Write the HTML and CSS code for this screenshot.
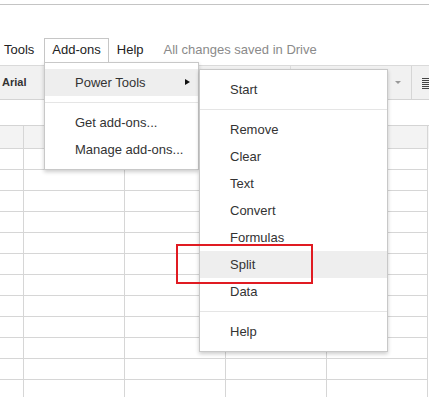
FILE: index.html
```html
<!DOCTYPE html>
<html lang="en">
<head>
    <meta charset="UTF-8">
    <title>Add-ons menu</title>
    <link rel="stylesheet" href="styles.css">
</head>
<body>

    <div class="topbar"></div>

    <div class="menubar">
        <span class="menu-item">Tools</span>
        <span class="menu-item active">Add-ons</span>
        <span class="menu-item">Help</span>
        <span class="save-status">All changes saved in Drive</span>
    </div>

    <div class="toolbar">
        <div class="tb-font">Arial</div>
        <div class="tb-seg tb-wide"></div>
        <div class="tb-seg tb-mid"></div>
        <div class="tb-seg tb-drop"><span class="tb-caret"></span></div>
        <div class="tb-seg tb-icon">
            <svg width="7" height="11" viewBox="0 0 7 11">
                <path d="M0 0.5h7M0 2.5h7M0 4.5h7M0 6.5h7M0 8.5h7M0 10.5h7" stroke="#444" stroke-width="1"/>
            </svg>
        </div>
    </div>

    <div class="gap-row"></div>

    <div class="sheet">
        <div class="row header">
            <div class="cell corner"></div>
            <div class="cell"></div>
            <div class="cell"></div>
            <div class="cell"></div>
            <div class="cell"></div>
        </div>
    </div>

    <!-- Add-ons dropdown -->
    <div class="dropdown addons">
        <div class="dd-item hover">Power Tools<span class="sub-arrow"></span></div>
        <div class="dd-sep"></div>
        <div class="dd-item">Get add-ons...</div>
        <div class="dd-item">Manage add-ons...</div>
    </div>

    <!-- Power Tools submenu -->
    <div class="dropdown powertools">
        <div class="dd-item">Start</div>
        <div class="dd-sep"></div>
        <div class="dd-item">Remove</div>
        <div class="dd-item">Clear</div>
        <div class="dd-item">Text</div>
        <div class="dd-item">Convert</div>
        <div class="dd-item">Formulas</div>
        <div class="dd-item hover">Split</div>
        <div class="dd-item">Data</div>
        <div class="dd-sep"></div>
        <div class="dd-item">Help</div>
    </div>

    <div class="highlight-box"></div>

    <script>
        // fill the sheet with empty rows
        const sheet = document.querySelector('.sheet');
        for (let i = 0; i < 12; i++) {
            const row = document.createElement('div');
            row.className = 'row';
            for (let j = 0; j < 5; j++) {
                const cell = document.createElement('div');
                cell.className = j === 0 ? 'cell corner' : 'cell';
                row.appendChild(cell);
            }
            sheet.appendChild(row);
        }
    </script>

</body>
</html>
```

FILE: styles.css
```css
/* General Styles */
body {
    font-family: 'Liberation Sans', Arial, sans-serif;
    font-size: 13px;
    color: #222;
    background: #fff;
    margin: 0;
    width: 429px;
    height: 397px;
    overflow: hidden;
    position: relative;
}

.topbar {
    height: 4px;
    border-bottom: 1px solid #c4c4c4;
}

/* Menu bar */
.menubar {
    display: flex;
    align-items: flex-end;
    height: 60px;
    margin-left: -4px;
    padding-bottom: 3px;
    box-sizing: border-box;
}

.menu-item {
    padding: 0 7px 2px;
    line-height: 21px;
    border: 1px solid transparent;
    border-bottom: none;
}

.menu-item.active {
    border-color: #c6c6c6;
    background: #fff;
    margin-left: 2px;
    position: relative;
    z-index: 3;
}

.save-status {
    color: #8a8a8a;
    margin-left: 12px;
    line-height: 21px;
    padding-bottom: 2px;
}

/* Toolbar */
.toolbar {
    display: flex;
    height: 35px;
    background: #f1f1f1;
    border-top: 1px solid #dadada;
    border-bottom: 1px solid #d4d4d4;
    box-sizing: border-box;
}

.tb-font {
    width: 44px;
    padding-left: 2px;
    box-sizing: border-box;
    font-size: 11px;
    font-weight: bold;
    color: #333;
    line-height: 33px;
}

.tb-seg {
    height: 100%;
    box-sizing: border-box;
}

.tb-wide {
    width: 248px;
    border-right: 1px solid #dcdcdc;
}

.tb-mid {
    width: 96px;
}

.tb-drop {
    width: 25px;
    border-right: 1px solid #d6d6d6;
    display: flex;
    align-items: center;
    justify-content: center;
}

.tb-caret {
    width: 0;
    height: 0;
    border-left: 3px solid transparent;
    border-right: 3px solid transparent;
    border-top: 3px solid #999;
    margin-left: -2px;
}

.tb-icon {
    flex: 1;
    padding: 12px 0 0 10px;
}

.tb-icon svg {
    display: block;
}

.gap-row {
    height: 25px;
}

/* Sheet grid */
.sheet {
    border-top: 1px solid #d4d4d4;
}

.row {
    display: grid;
    grid-template-columns: 24px repeat(4, 101px);
    height: 21px;
}

.row.header {
    height: 23px;
    background: #f3f3f3;
}

.cell {
    border-right: 1px solid #d6d6d6;
    border-bottom: 1px solid #d6d6d6;
    box-sizing: border-box;
}

/* Dropdown menus */
.dropdown {
    position: absolute;
    background: #fff;
    border: 1px solid #c8c8c8;
    box-shadow: 0 2px 4px rgba(0, 0, 0, 0.2);
    padding: 6px 0;
    color: #333;
    z-index: 2;
}

.addons {
    left: 44px;
    top: 62px;
    width: 155px;
    box-sizing: border-box;
}

.powertools {
    left: 199px;
    top: 69px;
    width: 189px;
    box-sizing: border-box;
    z-index: 4;
}

.dd-item {
    position: relative;
    line-height: 27px;
    padding-left: 30px;
}

.dd-item.hover {
    background: #eeeeee;
}

.dd-sep {
    border-top: 1px solid #e5e5e5;
    margin: 6px 0;
}

.sub-arrow {
    position: absolute;
    right: 8px;
    top: 10px;
    width: 0;
    height: 0;
    border-left: 5px solid #111;
    border-top: 3px solid transparent;
    border-bottom: 3px solid transparent;
}

.highlight-box {
    position: absolute;
    left: 176px;
    top: 244px;
    width: 137px;
    height: 40px;
    border: 2px solid #e01b22;
    box-sizing: border-box;
    z-index: 5;
}
```
